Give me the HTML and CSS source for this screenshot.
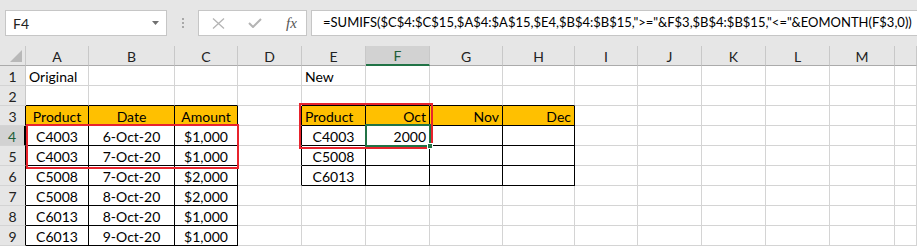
FILE: index.html
```html
<!DOCTYPE html>
<html>
<head>
<meta charset="utf-8">
<link rel="stylesheet" href="styles.css">
</head>
<body>
<div class="bar">
  <div class="namebox"><span>F4</span><svg class="arrow" width="7" height="4" viewBox="0 0 7 4"><path d="M0 0H7L3.5 4Z" fill="#707070"/></svg></div>
  <div class="dots"><i></i><i></i><i></i></div>
  <div class="fnbox">
    <svg class="ico" width="13" height="11" viewBox="0 0 13 11"><path d="M1 0.5L12 10.5M12 0.5L1 10.5" stroke="#b4b4b4" stroke-width="1.3" fill="none"/></svg>
    <svg class="ico" width="14" height="10" viewBox="0 0 14 10"><path d="M1 5L5 9L13 1" stroke="#b4b4b4" stroke-width="2" fill="none"/></svg>
    <span class="fx">fx</span>
  </div>
  <div class="formula">=SUMIFS($C$4:$C$15,$A$4:$A$15,$E4,$B$4:$B$15,"&gt;="&amp;F$3,$B$4:$B$15,"&lt;="&amp;EOMONTH(F$3,0))</div>
</div>
<div class="sheet">
  <div class="grid">
    <div class="ch corner"><svg width="12" height="12" viewBox="0 0 12 12"><path d="M12 0V12H0Z" fill="#b8b8b8"/></svg></div>
    <div class="ch">A</div><div class="ch">B</div><div class="ch">C</div><div class="ch">D</div><div class="ch">E</div><div class="ch sel">F</div><div class="ch">G</div><div class="ch">H</div><div class="ch">I</div><div class="ch">J</div><div class="ch">K</div><div class="ch">L</div><div class="ch">M</div><div class="ch"></div>

    <div class="rh">1</div><div class="c">Original</div><div class="c"></div><div class="c"></div><div class="c"></div><div class="c">New</div><div class="c"></div><div class="c"></div><div class="c"></div><div class="c"></div><div class="c"></div><div class="c"></div><div class="c"></div><div class="c"></div><div class="c"></div>

    <div class="rh">2</div><div class="c kb"></div><div class="c kb"></div><div class="c kb"></div><div class="c"></div><div class="c kb"></div><div class="c kb"></div><div class="c kb"></div><div class="c kb"></div><div class="c"></div><div class="c"></div><div class="c"></div><div class="c"></div><div class="c"></div><div class="c"></div>

    <div class="rh kr">3</div><div class="c k y ctr">Product</div><div class="c k y ctr">Date</div><div class="c k y ctr">Amount</div><div class="c kr"></div><div class="c k y">Product</div><div class="c k y r">Oct</div><div class="c k y r">Nov</div><div class="c k y r">Dec</div><div class="c"></div><div class="c"></div><div class="c"></div><div class="c"></div><div class="c"></div><div class="c"></div>

    <div class="rh kr selr">4</div><div class="c k ctr">C4003</div><div class="c k ctr">6-Oct-20</div><div class="c k ctr">$1,000</div><div class="c kr"></div><div class="c k ctr">C4003</div><div class="c k r">2000</div><div class="c k"></div><div class="c k"></div><div class="c"></div><div class="c"></div><div class="c"></div><div class="c"></div><div class="c"></div><div class="c"></div>

    <div class="rh kr">5</div><div class="c k ctr">C4003</div><div class="c k ctr">7-Oct-20</div><div class="c k ctr">$1,000</div><div class="c kr"></div><div class="c k ctr">C5008</div><div class="c k"></div><div class="c k"></div><div class="c k"></div><div class="c"></div><div class="c"></div><div class="c"></div><div class="c"></div><div class="c"></div><div class="c"></div>

    <div class="rh kr">6</div><div class="c k ctr">C5008</div><div class="c k ctr">7-Oct-20</div><div class="c k ctr">$2,000</div><div class="c kr"></div><div class="c k ctr">C6013</div><div class="c k"></div><div class="c k"></div><div class="c k"></div><div class="c"></div><div class="c"></div><div class="c"></div><div class="c"></div><div class="c"></div><div class="c"></div>

    <div class="rh kr">7</div><div class="c k ctr">C5008</div><div class="c k ctr">8-Oct-20</div><div class="c k ctr">$2,000</div><div class="c"></div><div class="c"></div><div class="c"></div><div class="c"></div><div class="c"></div><div class="c"></div><div class="c"></div><div class="c"></div><div class="c"></div><div class="c"></div><div class="c"></div>

    <div class="rh kr">8</div><div class="c k ctr">C6013</div><div class="c k ctr">8-Oct-20</div><div class="c k ctr">$1,000</div><div class="c"></div><div class="c"></div><div class="c"></div><div class="c"></div><div class="c"></div><div class="c"></div><div class="c"></div><div class="c"></div><div class="c"></div><div class="c"></div><div class="c"></div>

    <div class="rh kr">9</div><div class="c k ctr">C6013</div><div class="c k ctr">9-Oct-20</div><div class="c k ctr">$1,000</div><div class="c"></div><div class="c"></div><div class="c"></div><div class="c"></div><div class="c"></div><div class="c"></div><div class="c"></div><div class="c"></div><div class="c"></div><div class="c"></div><div class="c"></div>
  </div>
  <div class="redbox box1"></div>
  <div class="redbox box2"></div>
  <div class="active"><span class="handle"></span></div>
</div>
</body>
</html>
```

FILE: styles.css
```css
* { box-sizing: border-box; }
html, body { margin: 0; padding: 0; }
body {
  width: 917px;
  height: 246px;
  overflow: hidden;
  background: #ffffff;
  font-family: Lato, "Liberation Sans", sans-serif;
  color: #000;
}
.bar {
  height: 46px;
  background: #e6e6e6;
  display: flex;
  align-items: flex-start;
  padding-top: 10px;
}
.namebox {
  margin-left: 5px;
  width: 162px;
  height: 26px;
  background: #fff;
  border: 1px solid #c6c6c6;
  display: flex;
  align-items: center;
  justify-content: space-between;
  padding: 0 7px 0 7px;
  font-size: 14px;
  color: #222;
}
.dots {
  width: 31px;
  height: 26px;
  display: flex;
  flex-direction: column;
  align-items: center;
  justify-content: center;
  gap: 2px;
}
.dots i {
  display: block;
  width: 2px;
  height: 2px;
  background: #a8a8a8;
}
.fnbox {
  width: 109px;
  height: 26px;
  background: #fff;
  border: 1px solid #c6c6c6;
  display: flex;
  align-items: center;
  padding-left: 13px;
  gap: 23px;
}
.fx {
  font-family: "Liberation Serif", serif;
  font-style: italic;
  font-size: 15px;
  color: #555;
  margin-left: 1px;
}
.formula {
  margin-left: 4px;
  flex: 1;
  min-width: 0;
  height: 26px;
  background: #fff;
  border: 1px solid #c6c6c6;
  border-right: none;
  padding-left: 11px;
  font-size: 13px;
  line-height: 23px;
  white-space: nowrap;
  overflow: hidden;
  color: #000;
}
.sheet {
  position: relative;
}
.grid {
  display: grid;
  grid-template-columns: 26px 63px 86px 63px 64px 64px 64px 73px 72px 63px 64px 64px 64px 65px 1fr;
  grid-auto-rows: 20px;
}
.ch {
  background: #e6e6e6;
  border-right: 1px solid #c8c8c8;
  border-bottom: 1px solid #ababab;
  font-size: 14px;
  color: #222;
  display: flex;
  align-items: center;
  justify-content: center;
  padding-top: 1px;
}
.corner {
  align-items: flex-end;
  justify-content: flex-end;
  padding: 0 3px 3px 0;
}
.ch.sel {
  background: #d2d2d2;
  color: #1e5e38;
  border-bottom: 2px solid #217346;
}
.rh {
  background: #e6e6e6;
  border-right: 1px solid #c8c8c8;
  border-bottom: 1px solid #d4d4d4;
  font-size: 14px;
  color: #222;
  display: flex;
  align-items: center;
  justify-content: center;
  padding-top: 1px;
}
.rh.selr {
  background: #d2d2d2;
  color: #1e5e38;
  border-right: 2px solid #217346;
}
.c {
  border-right: 1px solid #d4d4d4;
  border-bottom: 1px solid #d4d4d4;
  font-size: 14px;
  line-height: 19px;
  padding: 1px 3px 0 3px;
  white-space: nowrap;
  overflow: hidden;
}
.y { background: #ffc000; }
.ctr { text-align: center; }
.r { text-align: right; }
.k { border-right-color: #000; border-bottom-color: #000; }
.kb { border-bottom-color: #000; }
.kr { border-right-color: #000; }
.rh.kr { border-right-color: #000; }
.redbox {
  position: absolute;
  border: 2px solid #e8232c;
}
.box1 { left: 26px; top: 78px; width: 213px; height: 45px; }
.box2 { left: 299px; top: 57px; width: 134px; height: 46px; }
.active {
  position: absolute;
  left: 365px;
  top: 78px;
  width: 66px;
  height: 23px;
  border: 2px solid #217346;
}
.handle {
  position: absolute;
  right: -4px;
  bottom: -4px;
  width: 6px;
  height: 6px;
  background: #217346;
  border: 1px solid #fff;
}
```
